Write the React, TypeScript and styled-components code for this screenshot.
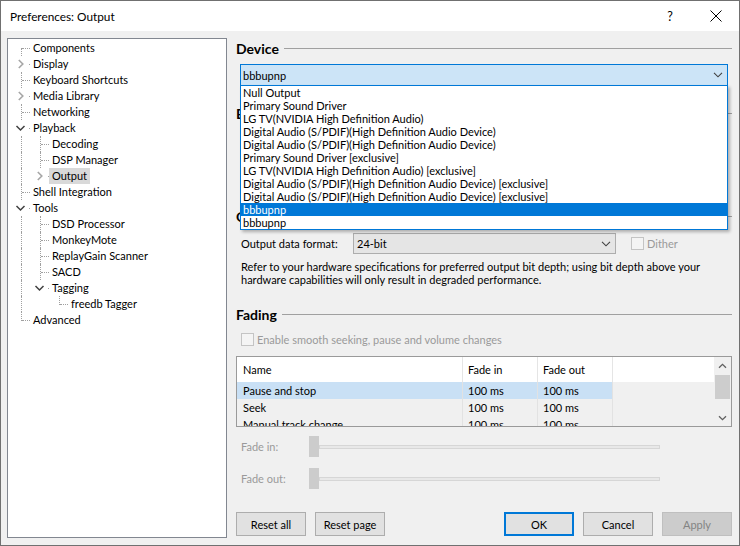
import React from 'react';
import styled, { createGlobalStyle } from 'styled-components';

const FONT = `Lato, "Noto Sans", "DejaVu Sans", sans-serif`;

const GlobalStyle = createGlobalStyle`
  html, body {
    margin: 0;
    padding: 0;
    background: #f0f0f0;
  }
  * {
    box-sizing: border-box;
  }
`;

const Window = styled.div`
  width: 740px;
  height: 546px;
  border: 1px solid #707070;
  background: #f0f0f0;
  display: flex;
  flex-direction: column;
  font-family: ${FONT};
  font-size: 11px;
  color: #000;
  overflow: hidden;
`;

const TitleBar = styled.div`
  height: 30px;
  flex: none;
  background: #fff;
  display: flex;
  align-items: center;
  padding-left: 9px;
`;

const TitleText = styled.div`
  flex: 1;
  font-size: 11.8px;
`;

const TitleButton = styled.div`
  width: 46px;
  height: 30px;
  display: flex;
  align-items: center;
  justify-content: center;
  font-size: 12.5px;
`;

const Body = styled.div`
  flex: 1;
  display: flex;
  gap: 9px;
  padding: 7px 7px 7px 6px;
  min-height: 0;
`;

/* ---------- tree ---------- */

const TreePanel = styled.div`
  width: 220px;
  flex: none;
  border: 1px solid #828790;
  background: #fff;
  padding: 1px 0 0 6px;
`;

const TreeRowEl = styled.div`
  display: flex;
  height: 16px;
  line-height: 16px;
  white-space: nowrap;
`;

const Guide = styled.span<{ $line: boolean }>`
  position: relative;
  width: 19px;
  flex: none;
  &::before {
    content: '';
    display: ${p => (p.$line ? 'block' : 'none')};
    position: absolute;
    left: 7px;
    top: 0;
    bottom: 0;
    border-left: 1px dotted #a0a0a0;
  }
`;

const Joint = styled.span<{ $fromTop: boolean; $toBottom: boolean }>`
  position: relative;
  width: 16px;
  flex: none;
  &::before {
    content: '';
    position: absolute;
    left: 7px;
    top: ${p => (p.$fromTop ? '0' : '8px')};
    bottom: ${p => (p.$toBottom ? '0' : '7px')};
    border-left: 1px dotted #a0a0a0;
  }
  &::after {
    content: '';
    position: absolute;
    left: 8px;
    right: 0;
    top: 8px;
    border-top: 1px dotted #a0a0a0;
  }
`;

const Expander = styled.span`
  position: absolute;
  left: 0;
  top: 0;
  width: 15px;
  height: 16px;
  background: #fff;
  z-index: 1;
  display: flex;
`;

const TreeLabel = styled.span<{ $selected?: boolean }>`
  padding: 0 3px;
  background: ${p => (p.$selected ? '#d9d9d9' : 'transparent')};
`;

/* ---------- right side ---------- */

const Page = styled.div`
  flex: 1;
  display: flex;
  flex-direction: column;
  position: relative;
  min-width: 0;
`;

const SectionHeading = styled.div<{ $mt: number }>`
  display: flex;
  align-items: center;
  gap: 5px;
  height: 16px;
  margin-top: ${p => p.$mt}px;
  font-weight: 700;
  font-size: 14px;
  flex: none;
  &::after {
    content: '';
    flex: 1;
    height: 1px;
    background: #a0a0a0;
  }
`;

const DeviceCombo = styled.div`
  margin: 8px 4px 0 4px;
  height: 22px;
  flex: none;
  border: 1px solid #0078d7;
  background: #cce4f7;
  display: flex;
  align-items: center;
  justify-content: space-between;
  padding: 0 4px 0 2px;
`;

const Popup = styled.div`
  position: absolute;
  top: 47px;
  left: 4px;
  right: 4px;
  border: 1px solid #0078d7;
  background: #fff;
  box-shadow: 2px 2px 3px rgba(0, 0, 0, 0.28);
  z-index: 5;
`;

const PopupItem = styled.div<{ $selected?: boolean }>`
  height: 13px;
  line-height: 13px;
  padding-left: 2px;
  white-space: nowrap;
  background: ${p => (p.$selected ? '#0078d7' : 'transparent')};
  color: ${p => (p.$selected ? '#fff' : '#000')};
`;

const HiddenBlock = styled.div<{ $h: number }>`
  height: ${p => p.$h}px;
  flex: none;
`;

const FormatRow = styled.div`
  margin-top: 9px;
  height: 21px;
  flex: none;
  display: flex;
  align-items: center;
  padding-left: 5px;
`;

const FieldLabel = styled.span<{ $w: number; $disabled?: boolean }>`
  width: ${p => p.$w}px;
  flex: none;
  color: ${p => (p.$disabled ? '#9a9a9a' : '#000')};
`;

const PlainCombo = styled.div`
  width: 263px;
  height: 21px;
  border: 1px solid #adadad;
  background: #e5e5e5;
  display: flex;
  align-items: center;
  justify-content: space-between;
  padding: 0 4px 0 3px;
`;

const CheckRow = styled.label<{ $mt?: number; $ml?: number }>`
  display: flex;
  align-items: center;
  gap: 3px;
  margin-top: ${p => p.$mt ?? 0}px;
  margin-left: ${p => p.$ml ?? 0}px;
  height: 14px;
  flex: none;
  color: #9a9a9a;
`;

const CheckBox = styled.span`
  width: 13px;
  height: 13px;
  border: 1px solid #c4c4c4;
  background: #f4f4f4;
  flex: none;
`;

const Description = styled.p`
  margin: 6px 0 0 5px;
  line-height: 13px;
  flex: none;
`;

/* ---------- list view ---------- */

const ListView = styled.div`
  margin-top: 10px;
  height: 71px;
  flex: none;
  border: 1px solid #9a9a9a;
  background: #f0f0f0;
  display: flex;
  overflow: hidden;
`;

const ListTable = styled.div`
  flex: 1;
  display: flex;
  flex-direction: column;
  min-width: 0;
`;

const ListHeader = styled.div`
  height: 25px;
  flex: none;
  display: flex;
  background: #fff;
`;

const ListRow = styled.div`
  height: 17px;
  flex: none;
  display: flex;
`;

const Cell = styled.div<{ $w: number; $pad: number; $selected?: boolean; $header?: boolean }>`
  width: ${p => p.$w}px;
  flex: none;
  padding-left: ${p => p.$pad}px;
  display: flex;
  align-items: center;
  white-space: nowrap;
  overflow: hidden;
  border-right: 1px solid ${p => (p.$header ? '#e5e5e5' : '#e2e2e2')};
  background: ${p => (p.$selected ? '#c9e0f5' : 'transparent')};
`;

const ScrollBar = styled.div`
  width: 17px;
  flex: none;
  background: #f0f0f0;
  display: flex;
  flex-direction: column;
`;

const ScrollArrow = styled.div`
  height: 17px;
  flex: none;
  display: flex;
  align-items: center;
  justify-content: center;
`;

const ScrollThumb = styled.div`
  height: 24px;
  margin: 1px 1px 0 1px;
  background: #cdcdcd;
  flex: none;
`;

const ScrollFill = styled.div`
  flex: 1;
`;

/* ---------- sliders ---------- */

const SliderRow = styled.div<{ $mt: number }>`
  margin-top: ${p => p.$mt}px;
  height: 21px;
  flex: none;
  display: flex;
  align-items: center;
  padding-left: 5px;
`;

const SliderThumb = styled.div`
  width: 10px;
  height: 21px;
  background: #cccccc;
  flex: none;
`;

const SliderTrack = styled.div`
  width: 341px;
  height: 4px;
  border: 1px solid #d6d6d6;
  background: #e8e8e8;
`;

/* ---------- buttons ---------- */

const ButtonRow = styled.div`
  margin-top: 23px;
  height: 24px;
  flex: none;
  display: flex;
  gap: 9px;
`;

const Button = styled.button<{ $default?: boolean }>`
  width: 70px;
  height: 24px;
  padding: 0;
  font-family: ${FONT};
  font-size: 11px;
  color: #000;
  background: #e1e1e1;
  border: ${p => (p.$default ? '2px solid #0078d7' : '1px solid #adadad')};
  &:disabled {
    background: #cccccc;
    border-color: #bfbfbf;
    color: #838383;
  }
`;

const Spacer = styled.div`
  flex: 1;
`;

/* ---------- icons ---------- */

const Chevron = ({ color = '#404040' }: { color?: string }) => (
  <svg width="10" height="6" viewBox="0 0 10 6">
    <polyline points="1,0.8 5,4.8 9,0.8" fill="none" stroke={color} strokeWidth="1.1" />
  </svg>
);

const TreeArrow = ({ open }: { open: boolean }) =>
  open ? (
    <svg width="15" height="16" viewBox="0 0 15 16">
      <polyline points="2.5,6 6.5,10 10.5,6" fill="none" stroke="#404040" strokeWidth="1.5" />
    </svg>
  ) : (
    <svg width="15" height="16" viewBox="0 0 15 16">
      <polyline points="4.8,4 8.8,8 4.8,12" fill="none" stroke="#a6a6a6" strokeWidth="1.6" />
    </svg>
  );

const CloseIcon = () => (
  <svg width="12" height="12" viewBox="0 0 12 12">
    <path d="M0.5 0.5 L11.5 11.5 M11.5 0.5 L0.5 11.5" stroke="#000" strokeWidth="1" />
  </svg>
);

/* ---------- data ---------- */

type Node = { label: string; level: number; exp?: 'open' | 'closed'; selected?: boolean };

const TREE: Node[] = [
  { label: 'Components', level: 0 },
  { label: 'Display', level: 0, exp: 'closed' },
  { label: 'Keyboard Shortcuts', level: 0 },
  { label: 'Media Library', level: 0, exp: 'closed' },
  { label: 'Networking', level: 0 },
  { label: 'Playback', level: 0, exp: 'open' },
  { label: 'Decoding', level: 1 },
  { label: 'DSP Manager', level: 1 },
  { label: 'Output', level: 1, exp: 'closed', selected: true },
  { label: 'Shell Integration', level: 0 },
  { label: 'Tools', level: 0, exp: 'open' },
  { label: 'DSD Processor', level: 1 },
  { label: 'MonkeyMote', level: 1 },
  { label: 'ReplayGain Scanner', level: 1 },
  { label: 'SACD', level: 1 },
  { label: 'Tagging', level: 1, exp: 'open' },
  { label: 'freedb Tagger', level: 2 },
  { label: 'Advanced', level: 0 },
];

const hasNextSibling = (i: number) => {
  const lvl = TREE[i].level;
  for (let j = i + 1; j < TREE.length; j++) {
    if (TREE[j].level < lvl) return false;
    if (TREE[j].level === lvl) return true;
  }
  return false;
};

const ancestorIndex = (i: number, level: number) => {
  for (let j = i - 1; j >= 0; j--) {
    if (TREE[j].level === level) return j;
  }
  return -1;
};

const DEVICES = [
  'Null Output',
  'Primary Sound Driver',
  'LG TV(NVIDIA High Definition Audio)',
  'Digital Audio (S/PDIF)(High Definition Audio Device)',
  'Digital Audio (S/PDIF)(High Definition Audio Device)',
  'Primary Sound Driver [exclusive]',
  'LG TV(NVIDIA High Definition Audio) [exclusive]',
  'Digital Audio (S/PDIF)(High Definition Audio Device) [exclusive]',
  'Digital Audio (S/PDIF)(High Definition Audio Device) [exclusive]',
  'bbbupnp',
  'bbbupnp',
];

const COLUMNS = [
  { title: 'Name', w: 226, pad: 6 },
  { title: 'Fade in', w: 75, pad: 5 },
  { title: 'Fade out', w: 75, pad: 5 },
];

const FADES = [
  ['Pause and stop', '100 ms', '100 ms'],
  ['Seek', '100 ms', '100 ms'],
  ['Manual track change', '100 ms', '100 ms'],
];

const TreeRow: React.FC<{ index: number }> = ({ index }) => {
  const node = TREE[index];
  const guides = [];
  for (let k = 0; k < node.level; k++) {
    const a = ancestorIndex(index, k);
    guides.push(<Guide key={k} $line={a >= 0 && hasNextSibling(a)} />);
  }
  return (
    <TreeRowEl>
      {guides}
      <Joint $fromTop={index !== 0} $toBottom={hasNextSibling(index)}>
        {node.exp && (
          <Expander>
            <TreeArrow open={node.exp === 'open'} />
          </Expander>
        )}
      </Joint>
      <TreeLabel $selected={node.selected}>{node.label}</TreeLabel>
    </TreeRowEl>
  );
};

export default function App() {
  return (
    <>
      <GlobalStyle />
      <Window>
        <TitleBar>
          <TitleText>Preferences: Output</TitleText>
          <TitleButton>?</TitleButton>
          <TitleButton>
            <CloseIcon />
          </TitleButton>
        </TitleBar>
        <Body>
          <TreePanel>
            {TREE.map((_, i) => (
              <TreeRow key={i} index={i} />
            ))}
          </TreePanel>

          <Page>
            <SectionHeading $mt={2}>Device</SectionHeading>
            <DeviceCombo>
              <span>bbbupnp</span>
              <Chevron />
            </DeviceCombo>

            <SectionHeading $mt={19}>Buffer length</SectionHeading>
            <HiddenBlock $h={87} />

            <SectionHeading $mt={0}>Output format</SectionHeading>
            <FormatRow>
              <FieldLabel $w={112}>Output data format:</FieldLabel>
              <PlainCombo>
                <span>24-bit</span>
                <Chevron />
              </PlainCombo>
              <CheckRow $ml={15}>
                <CheckBox />
                Dither
              </CheckRow>
            </FormatRow>
            <Description>
              Refer to your hardware specifications for preferred output bit depth; using bit depth above your
              <br />
              hardware capabilities will only result in degraded performance.
            </Description>

            <SectionHeading $mt={20}>Fading</SectionHeading>
            <CheckRow $mt={10} $ml={5}>
              <CheckBox />
              Enable smooth seeking, pause and volume changes
            </CheckRow>

            <ListView>
              <ListTable>
                <ListHeader>
                  {COLUMNS.map(c => (
                    <Cell key={c.title} $w={c.w} $pad={c.pad} $header>
                      {c.title}
                    </Cell>
                  ))}
                </ListHeader>
                {FADES.map((row, r) => (
                  <ListRow key={r}>
                    {row.map((v, c) => (
                      <Cell key={c} $w={COLUMNS[c].w} $pad={COLUMNS[c].pad} $selected={r === 0}>
                        {v}
                      </Cell>
                    ))}
                  </ListRow>
                ))}
              </ListTable>
              <ScrollBar>
                <ScrollArrow>
                  <svg width="9" height="6" viewBox="0 0 9 6">
                    <polyline points="1,4.8 4.5,1.3 8,4.8" fill="none" stroke="#606060" strokeWidth="1.3" />
                  </svg>
                </ScrollArrow>
                <ScrollThumb />
                <ScrollFill />
                <ScrollArrow>
                  <svg width="9" height="6" viewBox="0 0 9 6">
                    <polyline points="1,1.2 4.5,4.7 8,1.2" fill="none" stroke="#606060" strokeWidth="1.3" />
                  </svg>
                </ScrollArrow>
              </ScrollBar>
            </ListView>

            <SliderRow $mt={9}>
              <FieldLabel $w={68} $disabled>
                Fade in:
              </FieldLabel>
              <SliderThumb />
              <SliderTrack />
            </SliderRow>
            <SliderRow $mt={11}>
              <FieldLabel $w={68} $disabled>
                Fade out:
              </FieldLabel>
              <SliderThumb />
              <SliderTrack />
            </SliderRow>

            <ButtonRow>
              <Button>Reset all</Button>
              <Button>Reset page</Button>
              <Spacer />
              <Button $default>OK</Button>
              <Button>Cancel</Button>
              <Button disabled>Apply</Button>
            </ButtonRow>

            <Popup>
              {DEVICES.map((d, i) => (
                <PopupItem key={i} $selected={i === 9}>
                  {d}
                </PopupItem>
              ))}
            </Popup>
          </Page>
        </Body>
      </Window>
    </>
  );
}
